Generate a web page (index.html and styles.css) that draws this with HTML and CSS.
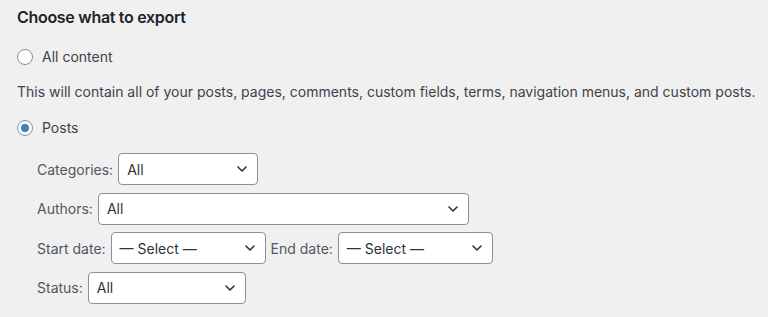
FILE: index.html
```html
<!DOCTYPE html>
<html lang="en">
<head>
<meta charset="utf-8">
<title>Export</title>
<link rel="stylesheet" href="styles.css">
</head>
<body>
<div class="wrap">
  <h2 class="title">Choose what to export</h2>
  <label class="radio-row all-row"><span class="radio"></span><span>All content</span></label>
  <p class="desc">This will contain all of your posts, pages, comments, custom fields, terms, navigation menus, and custom posts.</p>
  <label class="radio-row posts-row"><span class="radio checked"></span><span>Posts</span></label>
  <ul class="filters">
    <li class="filter">
      <span class="label">Categories:</span>
      <div class="select w-cat"><span class="val">All</span><svg class="chev" width="10" height="6" viewBox="0 0 10 6"><polyline points="1,1 5,5 9,1" /></svg></div>
    </li>
    <li class="filter">
      <span class="label">Authors:</span>
      <div class="select w-auth"><span class="val">All</span><svg class="chev" width="10" height="6" viewBox="0 0 10 6"><polyline points="1,1 5,5 9,1" /></svg></div>
    </li>
    <li class="filter">
      <span class="label">Start date:</span>
      <div class="select w-date"><span class="val">— Select —</span><svg class="chev" width="10" height="6" viewBox="0 0 10 6"><polyline points="1,1 5,5 9,1" /></svg></div>
      <span class="label">End date:</span>
      <div class="select w-date"><span class="val">— Select —</span><svg class="chev" width="10" height="6" viewBox="0 0 10 6"><polyline points="1,1 5,5 9,1" /></svg></div>
    </li>
    <li class="filter">
      <span class="label">Status:</span>
      <div class="select w-status"><span class="val">All</span><svg class="chev" width="10" height="6" viewBox="0 0 10 6"><polyline points="1,1 5,5 9,1" /></svg></div>
    </li>
  </ul>
</div>
</body>
</html>
```

FILE: styles.css
```css
html, body {
  margin: 0;
  padding: 0;
  background: #f0f0f1;
}
body {
  font-family: Inter, "Noto Sans", sans-serif;
  font-size: 14px;
  color: #3c434a;
}
.wrap {
  padding: 5px 0 0 17px;
}
.title {
  margin: 0;
  font-size: 16px;
  line-height: 24px;
  font-weight: 600;
  letter-spacing: -0.3px;
  color: #1d2327;
}
.radio-row {
  display: flex;
  align-items: center;
  gap: 9px;
  height: 20px;
  line-height: 20px;
}
.all-row {
  margin-top: 18px;
}
.posts-row {
  margin-top: 16px;
}
.radio {
  width: 16px;
  height: 16px;
  box-sizing: border-box;
  border: 1px solid #8c8f94;
  border-radius: 50%;
  background: #fff;
  display: flex;
  align-items: center;
  justify-content: center;
}
.radio.checked::before {
  content: "";
  width: 8px;
  height: 8px;
  border-radius: 50%;
  background: #3582c4;
}
.desc {
  margin: 15px 0 0;
  line-height: 20px;
}
.filters {
  list-style: none;
  margin: 15px 0 0;
  padding: 0 0 0 20px;
  display: flex;
  flex-direction: column;
  gap: 7.5px;
}
.filter {
  display: flex;
  align-items: center;
  gap: 5px;
}
.label {
  color: #50575e;
}
.select {
  box-sizing: border-box;
  height: 32px;
  border: 1px solid #8c8f94;
  border-radius: 4px;
  background: #fff;
  display: flex;
  align-items: center;
  justify-content: space-between;
  padding: 0 10px 0 8px;
  color: #2c3338;
}
.chev {
  fill: none;
  stroke: #2c3338;
  stroke-width: 1.6;
  stroke-linecap: round;
  stroke-linejoin: round;
}
.w-cat { width: 140px; }
.w-auth { width: 371px; }
.w-date { width: 155px; }
.w-status { width: 158px; }
```
